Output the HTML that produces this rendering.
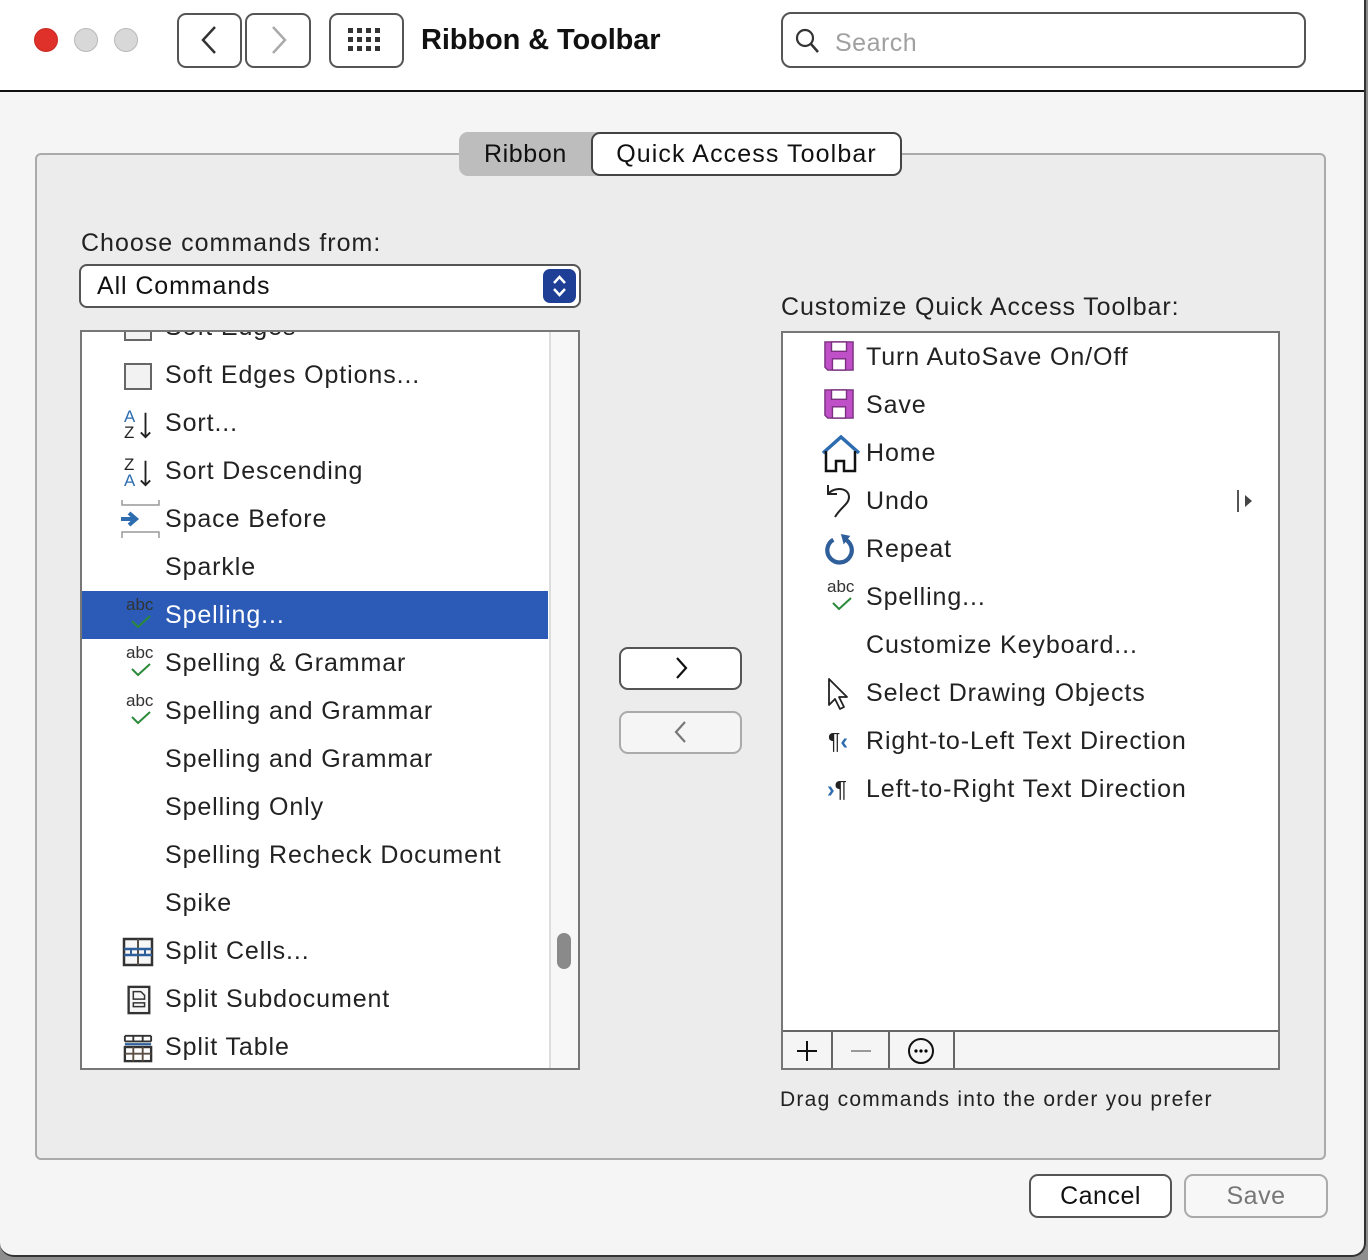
<!DOCTYPE html>
<html><head><meta charset="utf-8"><style>
*{margin:0;padding:0;box-sizing:border-box}
body{width:1368px;height:1260px;background:#8e8e8e;position:relative;overflow:hidden;font-family:"Liberation Sans",Arial,sans-serif;color:#222}
.win{position:absolute;left:0;top:0;width:1366px;height:1257px;background:#f5f5f5;border-right:2px solid #333;border-bottom:2px solid #333;border-bottom-right-radius:14px;border-bottom-left-radius:14px;overflow:hidden}
.a{position:absolute}
.title{left:0;top:0;width:1366px;height:92px;background:#fff;border-bottom:2px solid #111}
.dot{width:24px;height:24px;border-radius:50%;top:28px}
.btn{border:2px solid #555;border-radius:9px;background:#fff}
.panel{left:35px;top:153px;width:1291px;height:1007px;background:#ececec;border:2px solid #aaa;border-radius:6px}
.list{background:#fff;border:2px solid #777}
.row{position:absolute;left:0;height:48px;line-height:48px;font-size:25px;white-space:nowrap;letter-spacing:0.9px}
.row span{position:absolute;left:83px}
.ic{position:absolute;left:40px;top:10px;width:32px;height:30px}
.abc{position:absolute;left:44px;top:5px;font-size:17px;line-height:17px;color:#333;letter-spacing:0}
.chk{position:absolute;left:48px;top:23px}
</style></head><body>
<div class="win">
 <div class="a title">
  <div class="a dot" style="left:34px;background:#e0302a;border:1px solid #c82a24"></div>
  <div class="a dot" style="left:74px;background:#d8d8d8;border:1px solid #b8b8b8"></div>
  <div class="a dot" style="left:114px;background:#d8d8d8;border:1px solid #b8b8b8"></div>
  <div class="a btn" style="left:177px;top:13px;width:65px;height:55px"><svg width="61" height="51"><path d="M36 12 L24 25 L36 38" fill="none" stroke="#333" stroke-width="2.5"/></svg></div>
  <div class="a btn" style="left:245px;top:13px;width:66px;height:55px"><svg width="62" height="51"><path d="M26 12 L38 25 L26 38" fill="none" stroke="#aaa" stroke-width="2.5"/></svg></div>
  <div class="a btn" style="left:329px;top:13px;width:75px;height:55px"><svg width="71" height="51"><g fill="#333"><rect x="17" y="13" width="5" height="5"/><rect x="26" y="13" width="5" height="5"/><rect x="35" y="13" width="5" height="5"/><rect x="44" y="13" width="5" height="5"/><rect x="17" y="22" width="5" height="5"/><rect x="26" y="22" width="5" height="5"/><rect x="35" y="22" width="5" height="5"/><rect x="44" y="22" width="5" height="5"/><rect x="17" y="31" width="5" height="5"/><rect x="26" y="31" width="5" height="5"/><rect x="35" y="31" width="5" height="5"/><rect x="44" y="31" width="5" height="5"/></g></svg></div>
  <div class="a" style="left:421px;top:24px;font-size:29px;font-weight:bold;color:#111;letter-spacing:-0.1px">Ribbon &amp; Toolbar</div>
  <div class="a btn" style="left:781px;top:12px;width:525px;height:56px;border-radius:10px"><svg class="a" style="left:10px;top:12px" width="30" height="30"><circle cx="12" cy="12" r="8" fill="none" stroke="#333" stroke-width="2.2"/><path d="M18 18 L25 26" stroke="#333" stroke-width="2.5"/></svg><div class="a" style="left:52px;top:15px;font-size:25px;color:#a0a0a0;letter-spacing:0.5px">Search</div></div>
 </div>
 <div class="a panel"></div>
 <div class="a" style="left:459px;top:132px;width:140px;height:44px;background:#bdbdbd;border-radius:9px 0 0 9px;font-size:25px;line-height:44px;padding-left:25px;color:#111;letter-spacing:0.6px">Ribbon</div>
 <div class="a" style="left:591px;top:132px;width:311px;height:44px;background:#fff;border:2px solid #444;border-radius:9px;font-size:25px;line-height:40px;text-align:center;color:#111;letter-spacing:1.1px">Quick Access Toolbar</div>

 <div class="a" style="left:81px;top:229px;font-size:25px;color:#222;letter-spacing:1px">Choose commands from:</div>
 <div class="a" style="left:79px;top:264px;width:502px;height:44px;background:#fff;border:2px solid #555;border-radius:8px;font-size:25px;line-height:40px;padding-left:16px;color:#111;letter-spacing:0.9px">All Commands
  <div class="a" style="left:462px;top:3px;width:33px;height:34px;background:#1f3f97;border-radius:7px"><svg width="33" height="34"><path d="M11 14 L16.5 8 L22 14 M11 20 L16.5 26 L22 20" fill="none" stroke="#fff" stroke-width="2.5"/></svg></div>
 </div>

 <div class="a list" style="left:80px;top:330px;width:500px;height:740px;overflow:hidden">
  <div class="a" style="left:467px;top:0;width:31px;height:736px;background:#f7f7f7;border-left:2px solid #ddd"></div>
  <div class="a" style="left:475px;top:601px;width:14px;height:36px;background:#8a8a8a;border-radius:7px"></div>
  <div class="row" style="top:-29px"><div class="ic" style="left:42px;top:12px;width:28px;height:26px;border:2px solid #666;background:#f2f2f2"></div><span>Soft Edges</span></div>
  <div class="row" style="top:19px"><div class="ic" style="left:42px;top:12px;width:28px;height:27px;border:2.5px solid #666;background:#f2f2f2"></div><span>Soft Edges Options...</span></div>
  <div class="row" style="top:67px"><svg class="ic" viewBox="0 0 32 32"><text x="1" y="14" font-size="18" fill="#2e6cb0" font-family="Liberation Sans">A</text><text x="1" y="31" font-size="18" fill="#222" font-family="Liberation Sans">Z</text><path d="M24 4 V30 M19 25 L24 30 L29 25" fill="none" stroke="#222" stroke-width="2"/></svg><span>Sort...</span></div>
  <div class="row" style="top:115px"><svg class="ic" viewBox="0 0 32 32"><text x="1" y="14" font-size="18" fill="#222" font-family="Liberation Sans">Z</text><text x="1" y="31" font-size="18" fill="#2e6cb0" font-family="Liberation Sans">A</text><path d="M24 4 V30 M19 25 L24 30 L29 25" fill="none" stroke="#222" stroke-width="2"/></svg><span>Sort Descending</span></div>
  <div class="row" style="top:163px"><svg class="ic" style="left:38px;top:4px;width:40px;height:40px" viewBox="0 0 40 40"><path d="M2 1 V6 H39 V1 M2 39 V33 H39 V39" fill="none" stroke="#999" stroke-width="1.5"/><path d="M1 20 H14 M9 14 L16 20 L9 26" fill="none" stroke="#2e6cb0" stroke-width="4"/></svg><span>Space Before</span></div>
  <div class="row" style="top:211px"><span>Sparkle</span></div>
  <div class="row" style="top:259px;width:466px;background:#2c5bb7;color:#fff"><div class="abc">abc</div><svg class="chk" width="22" height="16"><path d="M2 7 L8 13 L20 2" fill="none" stroke="#2a8a3a" stroke-width="2"/></svg><span>Spelling...</span></div>
  <div class="row" style="top:307px"><div class="abc">abc</div><svg class="chk" width="22" height="16"><path d="M2 7 L8 13 L20 2" fill="none" stroke="#2a8a3a" stroke-width="2"/></svg><span>Spelling &amp; Grammar</span></div>
  <div class="row" style="top:355px"><div class="abc">abc</div><svg class="chk" width="22" height="16"><path d="M2 7 L8 13 L20 2" fill="none" stroke="#2a8a3a" stroke-width="2"/></svg><span>Spelling and Grammar</span></div>
  <div class="row" style="top:403px"><span>Spelling and Grammar</span></div>
  <div class="row" style="top:451px"><span>Spelling Only</span></div>
  <div class="row" style="top:499px"><span>Spelling Recheck Document</span></div>
  <div class="row" style="top:547px"><span>Spike</span></div>
  <div class="row" style="top:595px"><svg class="ic" viewBox="0 0 32 30"><rect x="2" y="2" width="28" height="26" fill="#f7f7f7" stroke="#333" stroke-width="2.5"/><path d="M16 2 V28" stroke="#5a4f45" stroke-width="2"/><path d="M2 12 H30 M2 18 H30" stroke="#2e5f9a" stroke-width="2.5"/><path d="M9 12 V18 M23 12 V18" stroke="#2e5f9a" stroke-width="2"/></svg><span>Split Cells...</span></div>
  <div class="row" style="top:643px"><svg class="ic" viewBox="0 0 32 32"><rect x="6" y="2" width="22" height="28" fill="#f7f7f7" stroke="#333" stroke-width="2.5"/><path d="M11 7 H19 L23 11 V15 H11 Z M11 19 H23 V23 H11 Z" fill="none" stroke="#333" stroke-width="1.6"/></svg><span>Split Subdocument</span></div>
  <div class="row" style="top:691px"><svg class="ic" viewBox="0 0 32 32"><path d="M2 3 H30 M2 9 H30 M2 3 V9 M11 3 V9 M21 3 V9 M30 3 V9" fill="none" stroke="#333" stroke-width="2"/><path d="M2 12 H30" stroke="#2e5f9a" stroke-width="2.5"/><rect x="2" y="15" width="28" height="15" fill="none" stroke="#333" stroke-width="2.5"/><path d="M11 15 V30 M21 15 V30 M2 22 H30" stroke="#5a4f45" stroke-width="2"/></svg><span>Split Table</span></div>
 </div>

 <div class="a btn" style="left:619px;top:647px;width:123px;height:43px"><svg width="119" height="39"><path d="M56 9 L65 19 L56 29" fill="none" stroke="#111" stroke-width="2.2"/></svg></div>
 <div class="a btn" style="left:619px;top:711px;width:123px;height:43px;border-color:#aaa;background:#f5f5f5"><svg width="119" height="39"><path d="M64 9 L55 19 L64 29" fill="none" stroke="#777" stroke-width="2.2"/></svg></div>

 <div class="a" style="left:781px;top:293px;font-size:25px;color:#222;letter-spacing:0.9px">Customize Quick Access Toolbar:</div>
 <div class="a list" style="left:781px;top:331px;width:499px;height:739px;overflow:hidden">
  <div class="row" style="top:0px"><svg class="ic" style="top:8px" viewBox="0 0 32 32"><path d="M1 1 H31 V31 H4 L1 28 Z" fill="#c050c8" stroke="#7a2f80" stroke-width="1.5"/><rect x="8" y="1" width="16" height="10" fill="#fff" stroke="#7a2f80" stroke-width="1.5"/><rect x="9" y="19" width="14" height="12" fill="#fff" stroke="#7a2f80" stroke-width="1.5"/></svg><span>Turn AutoSave On/Off</span></div>
  <div class="row" style="top:48px"><svg class="ic" style="top:8px" viewBox="0 0 32 32"><path d="M1 1 H31 V31 H4 L1 28 Z" fill="#c050c8" stroke="#7a2f80" stroke-width="1.5"/><rect x="8" y="1" width="16" height="10" fill="#fff" stroke="#7a2f80" stroke-width="1.5"/><rect x="9" y="19" width="14" height="12" fill="#fff" stroke="#7a2f80" stroke-width="1.5"/></svg><span>Save</span></div>
  <div class="row" style="top:96px"><svg class="ic" style="left:38px;top:6px;width:40px;height:38px" viewBox="0 0 40 38"><path d="M2 18 L20 2 L38 18" fill="none" stroke="#2e6cb0" stroke-width="3.5"/><path d="M5 16 V36 H15 V26 H23 V36 H34 V16" fill="none" stroke="#111" stroke-width="2.5"/></svg><span>Home</span></div>
  <div class="row" style="top:144px"><svg class="ic" style="top:6px;height:36px" viewBox="0 0 32 36"><path d="M5 2 V11 H14 M5 11 C12 3 26 5 26 14 C26 21 18 24 12 34" fill="none" stroke="#222" stroke-width="2"/></svg><span>Undo</span><div class="a" style="left:454px;top:13px;width:1.5px;height:22px;background:#555"></div><svg class="a" style="left:461px;top:17px" width="10" height="14"><path d="M1 1 L8 7 L1 13 Z" fill="#444"/></svg></div>
  <div class="row" style="top:192px"><svg class="ic" style="top:8px;height:34px" viewBox="0 0 34 34"><path d="M11 6 A13 13 0 1 0 22 5" fill="none" stroke="#2f5f9a" stroke-width="4.5"/><path d="M19 0 L29 2 L22 11 Z" fill="#2f5f9a"/></svg><span>Repeat</span></div>
  <div class="row" style="top:240px"><div class="abc">abc</div><svg class="chk" width="22" height="16"><path d="M2 7 L8 13 L20 2" fill="none" stroke="#2a8a3a" stroke-width="2"/></svg><span>Spelling...</span></div>
  <div class="row" style="top:288px"><span>Customize Keyboard...</span></div>
  <div class="row" style="top:336px"><svg class="ic" style="left:44px;top:8px;width:26px;height:34px" viewBox="0 0 26 34"><path d="M2 2 V28 L8 22 L13 32 L17 30 L12 20 L20 20 Z" fill="#fff" stroke="#222" stroke-width="1.8" stroke-linejoin="round"/></svg><span>Select Drawing Objects</span></div>
  <div class="row" style="top:384px"><div class="a" style="left:45px;top:0;font-size:23px;color:#222;letter-spacing:0">¶<b style="color:#2e6cb0;font-weight:bold">‹</b></div><span>Right-to-Left Text Direction</span></div>
  <div class="row" style="top:432px"><div class="a" style="left:44px;top:0;font-size:23px;color:#222;letter-spacing:0"><b style="color:#2e6cb0;font-weight:bold">›</b>¶</div><span>Left-to-Right Text Direction</span></div>
  <div class="a" style="left:0;top:697px;width:497px;height:40px;background:#f5f5f5;border-top:2px solid #666">
   <div class="a" style="left:48px;top:0;width:2px;height:38px;background:#666"></div>
   <div class="a" style="left:105px;top:0;width:2px;height:38px;background:#666"></div>
   <div class="a" style="left:170px;top:0;width:2px;height:38px;background:#666"></div>
   <svg class="a" style="left:10px;top:6px" width="28" height="26"><path d="M14 3 V23 M4 13 H24" stroke="#111" stroke-width="2"/></svg>
   <svg class="a" style="left:64px;top:6px" width="28" height="26"><path d="M4 13 H24" stroke="#999" stroke-width="2"/></svg>
   <svg class="a" style="left:124px;top:5px" width="28" height="28"><circle cx="14" cy="14" r="12" fill="none" stroke="#111" stroke-width="2"/><circle cx="9" cy="14" r="1.6"/><circle cx="14" cy="14" r="1.6"/><circle cx="19" cy="14" r="1.6"/></svg>
  </div>
 </div>
 <div class="a" style="left:780px;top:1088px;font-size:21px;color:#222;letter-spacing:1.25px">Drag commands into the order you prefer</div>

 <div class="a btn" style="left:1029px;top:1174px;width:143px;height:44px;font-size:25px;line-height:40px;text-align:center;color:#111;letter-spacing:0.5px">Cancel</div>
 <div class="a btn" style="left:1184px;top:1174px;width:144px;height:44px;font-size:25px;line-height:40px;text-align:center;color:#777;border-color:#aaa;background:#f7f7f7;letter-spacing:0.5px">Save</div>
</div>
</body></html>
